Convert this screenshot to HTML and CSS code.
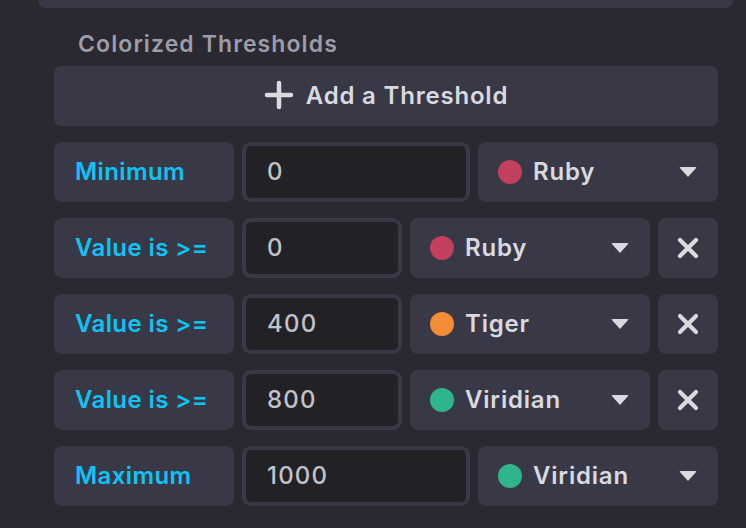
FILE: index.html
```html
<!DOCTYPE html>
<html>
<head>
<meta charset="utf-8">
<link rel="stylesheet" href="styles.css">
</head>
<body>
<div class="top-card"></div>
<div class="section">
  <div class="title">Colorized Thresholds</div>
  <button class="add-btn">
    <svg class="plus" width="30" height="30" viewBox="0 0 30 30"><path d="M15 3v24M3 15h24" stroke="#d9d9e0" stroke-width="4.5" stroke-linecap="round"/></svg>
    <span>Add a Threshold</span>
  </button>
  <div class="rows">
    <div class="row">
      <div class="label">Minimum</div>
      <div class="input">0</div>
      <div class="select"><span class="dot ruby"></span><span class="sel-text">Ruby</span><span class="caret"></span></div>
    </div>
    <div class="row">
      <div class="label">Value is &gt;=</div>
      <div class="input">0</div>
      <div class="select"><span class="dot ruby"></span><span class="sel-text">Ruby</span><span class="caret"></span></div>
      <div class="del"><svg width="22" height="22" viewBox="0 0 22 22"><path d="M3 3l16 16M19 3L3 19" stroke="#d9d9e0" stroke-width="4.2" stroke-linecap="round"/></svg></div>
    </div>
    <div class="row">
      <div class="label">Value is &gt;=</div>
      <div class="input">400</div>
      <div class="select"><span class="dot tiger"></span><span class="sel-text">Tiger</span><span class="caret"></span></div>
      <div class="del"><svg width="22" height="22" viewBox="0 0 22 22"><path d="M3 3l16 16M19 3L3 19" stroke="#d9d9e0" stroke-width="4.2" stroke-linecap="round"/></svg></div>
    </div>
    <div class="row">
      <div class="label">Value is &gt;=</div>
      <div class="input">800</div>
      <div class="select"><span class="dot viridian"></span><span class="sel-text">Viridian</span><span class="caret"></span></div>
      <div class="del"><svg width="22" height="22" viewBox="0 0 22 22"><path d="M3 3l16 16M19 3L3 19" stroke="#d9d9e0" stroke-width="4.2" stroke-linecap="round"/></svg></div>
    </div>
    <div class="row">
      <div class="label">Maximum</div>
      <div class="input">1000</div>
      <div class="select"><span class="dot viridian"></span><span class="sel-text">Viridian</span><span class="caret"></span></div>
    </div>
  </div>
</div>
</body>
</html>
```
FILE: styles.css
```css
html, body {
  margin: 0;
  padding: 0;
  background: #2a2831;
  font-family: Inter, "Noto Sans", sans-serif;
  width: 746px;
  height: 528px;
  overflow: hidden;
}
.top-card {
  margin-left: 38px;
  width: 695px;
  height: 8px;
  background: #393846;
  border-radius: 0 0 8px 8px;
}
.section {
  padding: 0 28px 0 54px;
}
.title {
  margin: 24px 0 10px 24px;
  font-size: 23px;
  line-height: 24px;
  font-weight: 600;
  letter-spacing: 1.1px;
  color: #9b9da8;
}
.add-btn {
  width: 664px;
  height: 60px;
  border: 0;
  border-radius: 7px;
  background: #393846;
  display: flex;
  align-items: center;
  justify-content: center;
  gap: 12px;
  font-family: inherit;
  font-size: 24px;
  font-weight: 600;
  letter-spacing: 0.8px;
  color: #d9d9e0;
  padding: 0 0 2px 0;
  margin: 0 0 16px 0;
}
.plus { display: block; }
.rows {
  display: flex;
  flex-direction: column;
  gap: 16px;
  width: 664px;
}
.row {
  display: flex;
  gap: 8px;
  height: 60px;
}
.label {
  width: 180px;
  flex: none;
  background: #393846;
  border-radius: 8px;
  display: flex;
  align-items: center;
  padding: 0 0 2px 21px;
  box-sizing: border-box;
  color: #0cc4f7;
  font-size: 24px;
  font-weight: 600;
  letter-spacing: 0.4px;
}
.input {
  flex: 1;
  background: #212126;
  border: 4px solid #393846;
  border-radius: 9px;
  box-sizing: border-box;
  display: flex;
  align-items: center;
  padding: 0 0 1px 21px;
  color: #c2c2ca;
  font-size: 24px;
  font-weight: 500;
  letter-spacing: 1.2px;
}
.select {
  width: 240px;
  flex: none;
  background: #393846;
  border-radius: 8px;
  display: flex;
  align-items: center;
  padding: 0 21px 0 20px;
  box-sizing: border-box;
  color: #d9d9e0;
  font-size: 24px;
  font-weight: 600;
  letter-spacing: 0.8px;
}
.dot {
  width: 24px;
  height: 24px;
  border-radius: 50%;
  flex: none;
  margin-right: 11px;
}
.ruby { background: #c33f5e; }
.tiger { background: #f48d38; }
.viridian { background: #2fb48c; }
.sel-text { flex: 1; padding-bottom: 2px; }
.caret {
  width: 0;
  height: 0;
  border-left: 9.5px solid transparent;
  border-right: 9.5px solid transparent;
  border-top: 10px solid #d9d9e0;
  border-radius: 2px;
}
.del {
  width: 60px;
  flex: none;
  background: #393846;
  border-radius: 8px;
  display: flex;
  align-items: center;
  justify-content: center;
}
.del svg { display: block; }
```
